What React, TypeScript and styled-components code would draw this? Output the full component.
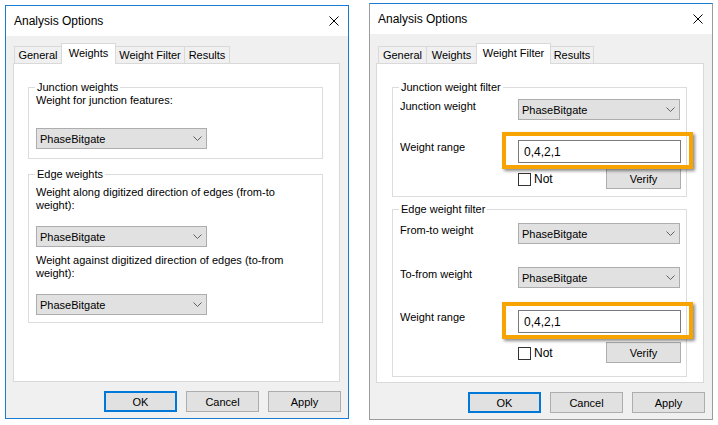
import React from "react";
import styled, { createGlobalStyle } from "styled-components";

const GlobalStyle = createGlobalStyle`
  html, body { margin: 0; padding: 0; background: #ffffff; }
  body {
    font-family: "Liberation Sans", Arial, sans-serif;
    font-size: 11px;
    color: #000;
  }
  * { box-sizing: border-box; }
`;

const Page = styled.div`
  display: flex;
  align-items: flex-start;
  gap: 20px;
  padding-left: 5px;
  width: 718px;
  height: 425px;
  overflow: hidden;
  background: #fff;
`;

const Window = styled.div<{ $top: number; $height: number; $focused?: boolean }>`
  margin-top: ${(p) => p.$top}px;
  width: 344px;
  height: ${(p) => p.$height}px;
  flex: none;
  display: flex;
  flex-direction: column;
  background: #f0f0f0;
  border: 1px solid ${(p) => (p.$focused ? "#1a7bd3" : "#9c9c9c")};
  border-top-color: #1a7bd3;
`;

const TitleBar = styled.div`
  height: 30px;
  flex: none;
  background: #fff;
  display: flex;
  align-items: center;
  justify-content: space-between;
  padding: 0 9px 0 8px;
  font-size: 12px;
`;

const Body = styled.div<{ $padTop: number; $padLeft: number }>`
  flex: 1;
  min-height: 0;
  display: flex;
  flex-direction: column;
  padding: ${(p) => p.$padTop}px 8px 6px ${(p) => p.$padLeft}px;
`;

const TabStrip = styled.div<{ $indent: number }>`
  display: flex;
  align-items: flex-end;
  height: 20px;
  flex: none;
  padding-left: ${(p) => p.$indent}px;
`;

const Tab = styled.div<{ $w: number; $active?: boolean }>`
  width: ${(p) => p.$w}px;
  height: ${(p) => (p.$active ? 21 : 17)}px;
  margin-bottom: ${(p) => (p.$active ? -1 : 0)}px;
  margin-left: -1px;
  &:first-child { margin-left: 0; }
  border: 1px solid #d9d9d9;
  border-bottom: none;
  background: ${(p) => (p.$active ? "#fff" : "#f0f0f0")};
  position: relative;
  z-index: ${(p) => (p.$active ? 1 : 0)};
  display: flex;
  align-items: center;
  justify-content: center;
  padding-bottom: ${(p) => (p.$active ? 3 : 0)}px;
  white-space: nowrap;
`;

const Panel = styled.div<{ $padLeft: number }>`
  flex: 1;
  min-height: 0;
  background: #fff;
  border: 1px solid #d9d9d9;
  padding: 17px 16px 0 ${(p) => p.$padLeft}px;
`;

const GroupBox = styled.fieldset<{ $mt?: number; $pb: number }>`
  margin: ${(p) => p.$mt ?? 0}px 0 0 0;
  padding: 0 6px ${(p) => p.$pb}px 7px;
  border: 1px solid #dcdcdc;
  min-width: 0;
`;

const Legend = styled.legend`
  padding: 0 2px;
  margin-left: -1px;
  line-height: 13px;
  font-size: 11px;
`;

const Label = styled.div<{ $mt?: number }>`
  margin-top: ${(p) => p.$mt ?? 0}px;
  line-height: 13px;
`;

const Select = styled.div<{ $w: number; $mt?: number }>`
  width: ${(p) => p.$w}px;
  height: 21px;
  margin-top: ${(p) => p.$mt ?? 0}px;
  background: #e1e1e1;
  border: 1px solid #adadad;
  display: flex;
  align-items: center;
  justify-content: space-between;
  padding: 0 4px 0 3px;
`;

const FormRow = styled.div<{ $mt: number }>`
  display: grid;
  grid-template-columns: 118px 163px;
  align-items: start;
  margin-top: ${(p) => p.$mt}px;
`;

const RowLabel = styled.div`
  padding-top: 1px;
  line-height: 13px;
`;

const InputWrap = styled.div`
  position: relative;
  width: 163px;
`;

const TextInput = styled.div`
  height: 23px;
  border: 1px solid #7a7a7a;
  background: #fff;
  display: flex;
  align-items: center;
  padding-left: 5px;
  font-size: 12px;
`;

const Highlight = styled.div`
  position: absolute;
  top: -8px;
  left: -16px;
  right: -12px;
  bottom: -6px;
  border: 4px solid #f7a400;
  box-shadow: 2px 2px 3px rgba(0, 0, 0, 0.45);
  pointer-events: none;
  z-index: 2;
`;

const CheckRow = styled.div`
  display: flex;
  align-items: center;
  justify-content: space-between;
  width: 163px;
`;

const CheckLabel = styled.label`
  display: flex;
  align-items: center;
  gap: 3px;
  padding-top: 1px;
  font-size: 12px;
`;

const CheckBox = styled.span`
  width: 13px;
  height: 13px;
  border: 1px solid #333;
  background: #fff;
  display: inline-block;
`;

const ButtonRow = styled.div`
  display: flex;
  justify-content: flex-end;
  gap: 9px;
  margin-top: 9px;
  margin-right: -1px;
  flex: none;
`;

const Button = styled.button<{ $w?: number; $primary?: boolean }>`
  width: ${(p) => p.$w ?? 73}px;
  height: 21px;
  margin: 0;
  padding: 0;
  font: inherit;
  color: #000;
  background: #e1e1e1;
  border: ${(p) => (p.$primary ? "2px solid #0078d7" : "1px solid #adadad")};
  display: flex;
  align-items: center;
  justify-content: center;
`;

const CloseIcon = () => (
  <svg width="10" height="10" viewBox="0 0 10 10">
    <path d="M0.5 0.5 L9.5 9.5 M9.5 0.5 L0.5 9.5" stroke="#000" strokeWidth="1" fill="none" />
  </svg>
);

const Chevron = () => (
  <svg width="9" height="5" viewBox="0 0 9 5">
    <polyline points="0.5,0.5 4.5,4.5 8.5,0.5" stroke="#606060" strokeWidth="1" fill="none" />
  </svg>
);

const Dropdown = ({ w, mt }: { w: number; mt?: number }) => (
  <Select $w={w} $mt={mt}>
    <span>PhaseBitgate</span>
    <Chevron />
  </Select>
);

const tabNames = ["General", "Weights", "Weight Filter", "Results"];

const Tabs = ({ widths, active, indent }: { widths: number[]; active: number; indent: number }) => (
  <TabStrip $indent={indent}>
    {tabNames.map((t, i) => (
      <Tab key={t} $w={widths[i]} $active={i === active}>
        {t}
      </Tab>
    ))}
  </TabStrip>
);

const Buttons = () => (
  <ButtonRow>
    <Button $primary>OK</Button>
    <Button>Cancel</Button>
    <Button>Apply</Button>
  </ButtonRow>
);

const RangeRow = ({ mt }: { mt: number }) => (
  <FormRow $mt={mt}>
    <RowLabel>Weight range</RowLabel>
    <InputWrap>
      <TextInput>0,4,2,1</TextInput>
      <Highlight />
    </InputWrap>
  </FormRow>
);

const VerifyRow = ({ mt }: { mt: number }) => (
  <FormRow $mt={mt}>
    <span />
    <CheckRow>
      <CheckLabel>
        <CheckBox />
        Not
      </CheckLabel>
      <Button $w={75}>Verify</Button>
    </CheckRow>
  </FormRow>
);

export default function App() {
  return (
    <>
      <GlobalStyle />
      <Page>
        <Window $top={5} $height={414} $focused>
          <TitleBar>
            <span>Analysis Options</span>
            <CloseIcon />
          </TitleBar>
          <Body $padTop={7} $padLeft={7}>
            <Tabs widths={[48, 55, 70, 46]} active={1} indent={1} />
            <Panel $padLeft={14}>
              <GroupBox $pb={9}>
                <Legend>Junction weights</Legend>
                <Label>Weight for junction features:</Label>
                <Dropdown w={171} mt={21} />
              </GroupBox>
              <GroupBox $mt={9} $pb={7}>
                <Legend>Edge weights</Legend>
                <Label $mt={5}>
                  Weight along digitized direction of edges (from-to
                  <br />
                  weight):
                </Label>
                <Dropdown w={171} mt={14} />
                <Label $mt={7}>
                  Weight against digitized direction of edges (to-from
                  <br />
                  weight):
                </Label>
                <Dropdown w={171} mt={14} />
              </GroupBox>
            </Panel>
            <Buttons />
          </Body>
        </Window>

        <Window $top={3} $height={417}>
          <TitleBar>
            <span>Analysis Options</span>
            <CloseIcon />
          </TitleBar>
          <Body $padTop={9} $padLeft={6}>
            <Tabs widths={[49, 51, 75, 44]} active={2} indent={2} />
            <Panel $padLeft={15}>
              <GroupBox $pb={7}>
                <Legend>Junction weight filter</Legend>
                <FormRow $mt={5}>
                  <RowLabel>Junction weight</RowLabel>
                  <Dropdown w={162} />
                </FormRow>
                <RangeRow mt={20} />
                <VerifyRow mt={5} />
              </GroupBox>
              <GroupBox $mt={6} $pb={13}>
                <Legend>Edge weight filter</Legend>
                <FormRow $mt={7}>
                  <RowLabel>From-to weight</RowLabel>
                  <Dropdown w={162} />
                </FormRow>
                <FormRow $mt={23}>
                  <RowLabel>To-from weight</RowLabel>
                  <Dropdown w={162} />
                </FormRow>
                <RangeRow mt={22} />
                <VerifyRow mt={9} />
              </GroupBox>
            </Panel>
            <Buttons />
          </Body>
        </Window>
      </Page>
    </>
  );
}
